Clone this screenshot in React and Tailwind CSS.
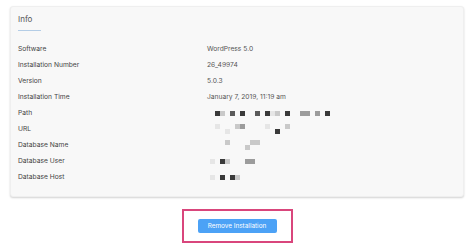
import React from "react";

const shade = {
  d: "bg-[#3a3a3a]",
  m: "bg-[#5a5a5a]",
  g: "bg-[#9c9c9c]",
  l: "bg-[#c9c9c9]",
  v: "bg-[#e6e6e6]",
};

// pixelated (redacted) values, one string per 5px strip
const Blur = ({ lines, shift = 0 }) => (
  <div className="flex flex-col" style={{ marginLeft: shift }}>
    {lines.map((line, i) => (
      <div key={i} className="flex h-[5px]">
        {line.split("").map((c, j) => (
          <span key={j} className={`w-[5px] h-[5px] ${shade[c] || ""}`} />
        ))}
      </div>
    ))}
  </div>
);

const rows = [
  { label: "Software", value: "WordPress 5.0" },
  { label: "Installation Number", value: "26_49974" },
  { label: "Version", value: "5.0.3" },
  { label: "Installation Time", value: "January 7, 2019, 11:19 am" },
  { label: "Path", blur: [".dl.m.d..m.dvl.d..gg.g.d"] },
  { label: "URL", blur: [".v...lg....v...l", "...v.........d"] },
  { label: "Database Name", blur: ["...l....ll", ".......l"] },
  { label: "Database User", blur: ["v.dl...gg"] },
  { label: "Database Host", blur: ["v.d.dl"] },
];

const App = () => {
  return (
    <div
      className="w-full h-[248px] bg-white pt-[6px] px-[10px]"
      style={{ fontFamily: "Inter, 'Noto Sans', sans-serif" }}
    >
      <div className="h-[191px] bg-[#f8f8f8] border border-[#efefef] rounded-[3px] shadow-[0_1px_2px_rgba(0,0,0,0.18)] px-[7px] pt-[6px]">
        <div className="text-[8px] leading-[12px] text-[#555]">Info</div>
        <div className="mt-[5px] w-[23px] h-px bg-[#b4cde6]" />

        <div className="mt-[10px] grid grid-cols-[189px_1fr]">
          {rows.map((r) => (
            <React.Fragment key={r.label}>
              <div className="h-[16px] flex items-center text-[6.7px] text-[#444]">
                {r.label}
              </div>
              <div className="h-[16px] flex items-center text-[6.7px] text-[#555]">
                {r.blur ? <Blur lines={r.blur} shift={3} /> : r.value}
              </div>
            </React.Fragment>
          ))}
        </div>
      </div>

      <div className="flex justify-center mt-[12px]">
        <div className="w-[111px] h-[34px] border-2 border-[#d9467c] flex items-center justify-center">
          <button className="w-[79px] h-[14px] rounded-[2px] bg-[#4ca2f6] text-white text-[6.4px] leading-none">
            Remove Installation
          </button>
        </div>
      </div>
    </div>
  );
};

export default App;
